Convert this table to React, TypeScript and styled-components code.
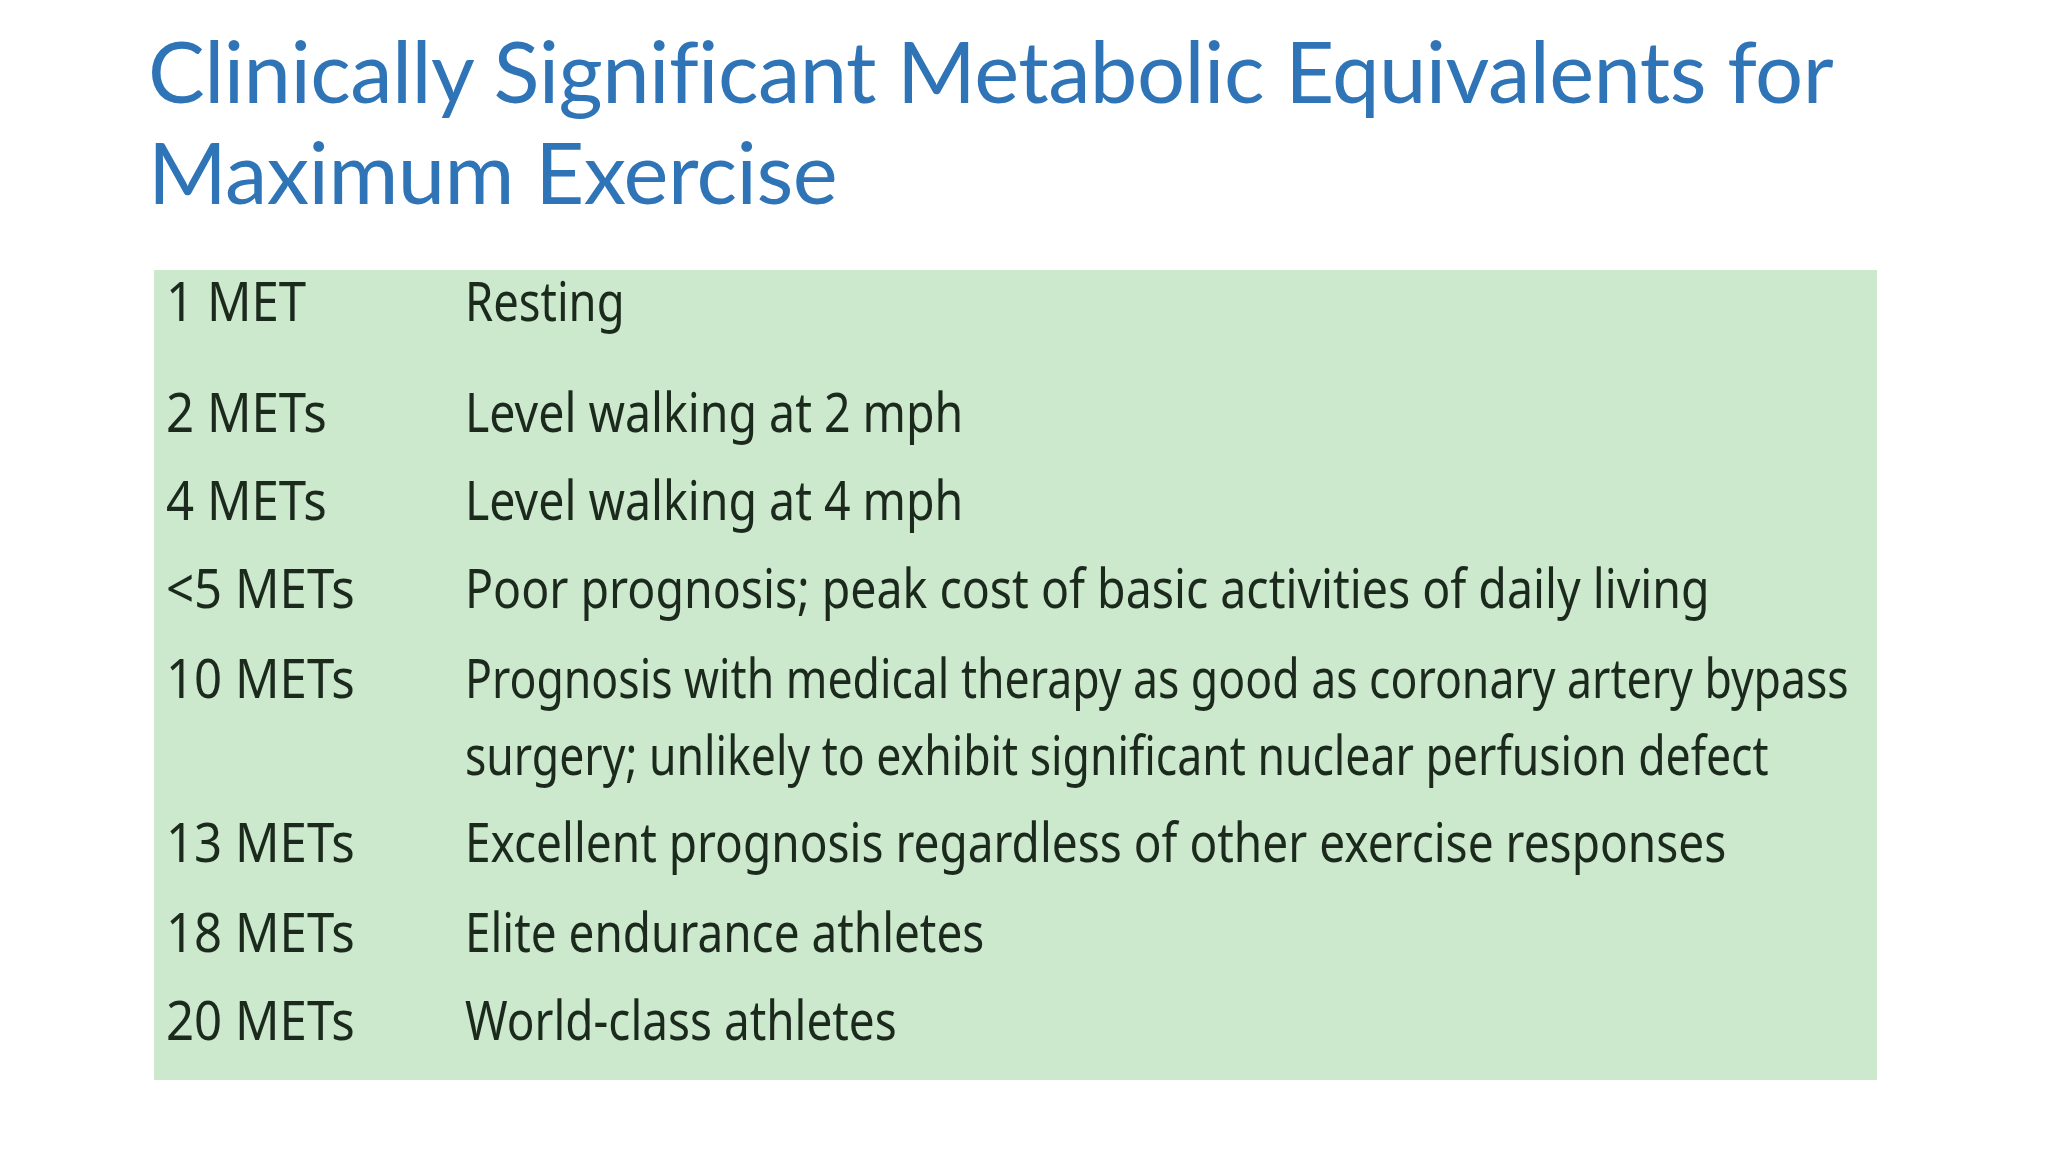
import React from "react";
import styled, { createGlobalStyle } from "styled-components";

const GlobalStyle = createGlobalStyle`
  html, body {
    margin: 0;
    padding: 0;
    background: #ffffff;
  }
  body {
    width: 2048px;
    height: 1152px;
    overflow: hidden;
  }
`;

const Slide = styled.main`
  width: 2048px;
  height: 1152px;
  box-sizing: border-box;
  padding-top: 20px;
  display: flex;
  flex-direction: column;
  background: #ffffff;
`;

const Title = styled.h1`
  margin: 0 0 0 148px;
  width: 1800px;
  font-family: Lato, "Open Sans", sans-serif;
  font-weight: 400;
  font-size: 85px;
  line-height: 101px;
  color: #2e74b6;
  letter-spacing: -0.55px;
`;

const TableBox = styled.section`
  margin: 48px 0 0 154px;
  width: 1723px;
  height: 810px;
  box-sizing: border-box;
  padding: 0 12px;
  background: #cde9cd;
`;

const Table = styled.div`
  display: grid;
  grid-template-columns: 299px 1fr;
  font-family: "Noto Sans", "Open Sans", sans-serif;
  font-size: 54px;
  color: #1b2a1d;
`;

/* Narrow face: the reference uses a condensed humanist sans */
const Label = styled.div<{ $gap: number; $lh: number }>`
  margin-bottom: ${(p) => p.$gap}px;
  line-height: ${(p) => p.$lh}px;
  white-space: nowrap;
  transform: scaleX(0.91);
  transform-origin: left center;
`;

const Desc = styled.div<{ $gap: number; $lh: number; $squeeze: number }>`
  margin-bottom: ${(p) => p.$gap}px;
  line-height: ${(p) => p.$lh}px;
  white-space: nowrap;
  transform: scaleX(${(p) => p.$squeeze});
  transform-origin: left center;
`;

const rows: { met: string; lines: string[]; gap: number; lh: number; squeeze: number }[] = [
  { met: "1 MET", lines: ["Resting"], gap: 42, lh: 61, squeeze: 0.84 },
  { met: "2 METs", lines: ["Level walking at 2 mph"], gap: 11, lh: 77, squeeze: 0.86 },
  { met: "4 METs", lines: ["Level walking at 4 mph"], gap: 11, lh: 77, squeeze: 0.86 },
  {
    met: "<5 METs",
    lines: ["Poor prognosis; peak cost of basic activities of daily living"],
    gap: 13,
    lh: 77,
    squeeze: 0.86,
  },
  {
    met: "10 METs",
    lines: [
      "Prognosis with medical therapy as good as coronary artery bypass",
      "surgery; unlikely to exhibit significant nuclear perfusion defect",
    ],
    gap: 10,
    lh: 77,
    squeeze: 0.825,
  },
  {
    met: "13 METs",
    lines: ["Excellent prognosis regardless of other exercise responses"],
    gap: 13,
    lh: 77,
    squeeze: 0.852,
  },
  { met: "18 METs", lines: ["Elite endurance athletes"], gap: 11, lh: 77, squeeze: 0.85 },
  { met: "20 METs", lines: ["World-class athletes"], gap: 0, lh: 77, squeeze: 0.85 },
];

export default function App() {
  return (
    <>
      <GlobalStyle />
      <Slide>
        <Title>
          Clinically Significant Metabolic Equivalents for
          <br />
          Maximum Exercise
        </Title>
        <TableBox>
          <Table>
            {rows.map((r) => (
              <React.Fragment key={r.met}>
                <Label $gap={r.gap} $lh={r.lh}>
                  {r.met}
                </Label>
                <Desc $gap={r.gap} $lh={r.lh} $squeeze={r.squeeze}>
                  {r.lines.map((l, i) => (
                    <React.Fragment key={i}>
                      {i > 0 && <br />}
                      {l}
                    </React.Fragment>
                  ))}
                </Desc>
              </React.Fragment>
            ))}
          </Table>
        </TableBox>
      </Slide>
    </>
  );
}
